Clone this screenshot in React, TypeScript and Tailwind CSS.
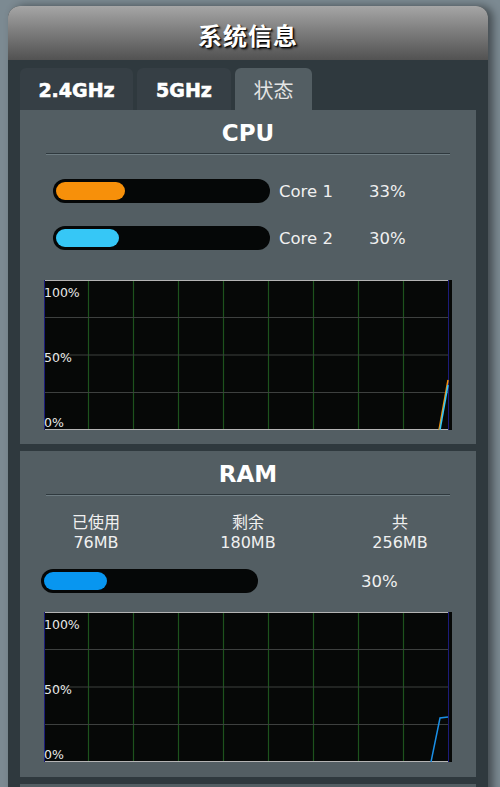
const GRID_X = [44, 89, 134, 179, 224, 269, 314, 359];
const GRID_Y = [37.5, 75, 112.5];

type Line = { color: string; points: string };

function UsageChart({ lines }: { lines: Line[] }) {
  return (
    <svg width="408" height="150" viewBox="0 0 408 150" className="block">
      <rect x="0" y="0" width="408" height="150" fill="#060807" />
      {GRID_X.map((x) => (
        <line key={x} x1={x + 0.5} y1="0" x2={x + 0.5} y2="150" stroke="#1d521d" strokeWidth="1.2" />
      ))}
      {GRID_Y.map((y) => (
        <line key={y} x1="0" y1={y} x2="405" y2={y} stroke="#3d403f" strokeWidth="1.2" />
      ))}
      <line x1="0" y1="0.5" x2="405" y2="0.5" stroke="#b4b4b4" strokeWidth="1" />
      <line x1="0" y1="149.5" x2="405" y2="149.5" stroke="#b4b4b4" strokeWidth="1" />
      <line x1="0.5" y1="0" x2="0.5" y2="150" stroke="#1c1c7a" strokeWidth="1" />
      <line x1="404.5" y1="0" x2="404.5" y2="150" stroke="#1c1c7a" strokeWidth="1" />
      {lines.map((l, i) => (
        <polyline key={i} points={l.points} fill="none" stroke={l.color} strokeWidth="1.5" />
      ))}
      <g fontFamily="'DejaVu Sans', sans-serif" fontSize="12.5" fill="#e8e8e8">
        <text x="0" y="17">100%</text>
        <text x="0" y="82">50%</text>
        <text x="0" y="147">0%</text>
      </g>
    </svg>
  );
}

function Bar({ fill, width }: { fill: string; width: number }) {
  return (
    <div className="w-[217px] h-[24px] rounded-full bg-[#050707] p-[3px] shrink-0">
      <div className={`h-[18px] rounded-full ${fill}`} style={{ width }} />
    </div>
  );
}

function SectionTitle({ children }: { children: string }) {
  return (
    <>
      <div className="h-[43px] pt-[4px] flex items-center justify-center text-[23px] font-bold text-white">{children}</div>
      <div className="mx-[26px] h-[2px] border-t border-t-[#2f393e] border-b border-b-[#6e7c82]" />
    </>
  );
}

export default function App() {
  return (
    <div className="min-h-screen w-[500px] bg-[#7c8a92] pt-[6px] pl-[8px] pr-[12px] overflow-hidden font-['DejaVu_Sans','Noto_Sans_CJK_SC',sans-serif]">
      <div className="rounded-t-[12px] overflow-hidden bg-[#2f393e] shadow-[5px_0_9px_rgba(0,0,0,0.45)] pb-[8px]">
        {/* header */}
        <div className="h-[54px] pt-[4px] bg-gradient-to-b from-[#a6a6a6] to-[#525252] flex items-center justify-center">
          <span className="text-[24px] font-bold tracking-[1px] text-white [text-shadow:1px_1px_1px_#000,2px_2px_2px_rgba(0,0,0,0.6)] font-['Noto_Sans_CJK_SC',sans-serif]">
            系统信息
          </span>
        </div>

        {/* tabs */}
        <div className="flex gap-[4px] pl-[12px] pt-[8px]">
          <div className="w-[113px] h-[42px] pt-[2px] rounded-t-[6px] bg-[#363f45] flex items-center justify-center text-[19px] font-bold text-white [-webkit-text-stroke:0.6px_white]">
            2.4GHz
          </div>
          <div className="w-[94px] h-[42px] pt-[2px] rounded-t-[6px] bg-[#363f45] flex items-center justify-center text-[19px] font-bold text-white [-webkit-text-stroke:0.6px_white]">
            5GHz
          </div>
          <div className="w-[77px] h-[42px] pt-[2px] rounded-t-[6px] bg-[#535e63] flex items-center justify-center text-[20px] text-[#e4e4e4] font-['Noto_Sans_CJK_SC',sans-serif]">
            状态
          </div>
        </div>

        <div className="mx-[12px] flex flex-col gap-[7px]">
          {/* CPU */}
          <div className="bg-[#535e63] pb-[14px]">
            <SectionTitle>CPU</SectionTitle>
            <div className="mt-[24px] flex flex-col gap-[23px] text-[16.5px] leading-[20px] text-[#f0f0f0]">
              <div className="h-[24px] flex items-center ml-[33px]">
                <Bar fill="bg-[#f7900a]" width={69} />
                <span className="ml-[9px] w-[90px] pt-[2px]">Core 1</span>
                <span className="pt-[2px]">33%</span>
              </div>
              <div className="h-[24px] flex items-center ml-[33px]">
                <Bar fill="bg-[#36c7f6]" width={63} />
                <span className="ml-[9px] w-[90px] pt-[2px]">Core 2</span>
                <span className="pt-[2px]">30%</span>
              </div>
            </div>
            <div className="mt-[30px] ml-[24px]">
              <UsageChart
                lines={[
                  { color: "#f7900a", points: "395,150 404,100" },
                  { color: "#36c7f6", points: "396,150 404,105" },
                ]}
              />
            </div>
          </div>

          {/* RAM */}
          <div className="bg-[#535e63] pb-[15px]">
            <SectionTitle>RAM</SectionTitle>
            <div className="mt-[15px] grid grid-cols-3 text-center text-[16px] text-[#f0f0f0]">
              <div>
                <div className="h-[21px] leading-[21px] font-['Noto_Sans_CJK_SC',sans-serif]">已使用</div>
                <div className="h-[21px] leading-[21px]">76MB</div>
              </div>
              <div>
                <div className="h-[21px] leading-[21px] font-['Noto_Sans_CJK_SC',sans-serif]">剩余</div>
                <div className="h-[21px] leading-[21px]">180MB</div>
              </div>
              <div>
                <div className="h-[21px] leading-[21px] font-['Noto_Sans_CJK_SC',sans-serif]">共</div>
                <div className="h-[21px] leading-[21px]">256MB</div>
              </div>
            </div>
            <div className="h-[24px] mt-[16px] ml-[21px] flex items-center text-[16.5px] leading-[20px] text-[#f0f0f0]">
              <Bar fill="bg-[#0896f0]" width={63} />
              <span className="ml-[103px] pt-[2px]">30%</span>
            </div>
            <div className="mt-[19px] ml-[24px]">
              <UsageChart lines={[{ color: "#1a8fe6", points: "387,150 396,106 404,105" }]} />
            </div>
          </div>

          <div className="bg-[#535e63] h-[40px]" />
        </div>
      </div>
    </div>
  );
}
